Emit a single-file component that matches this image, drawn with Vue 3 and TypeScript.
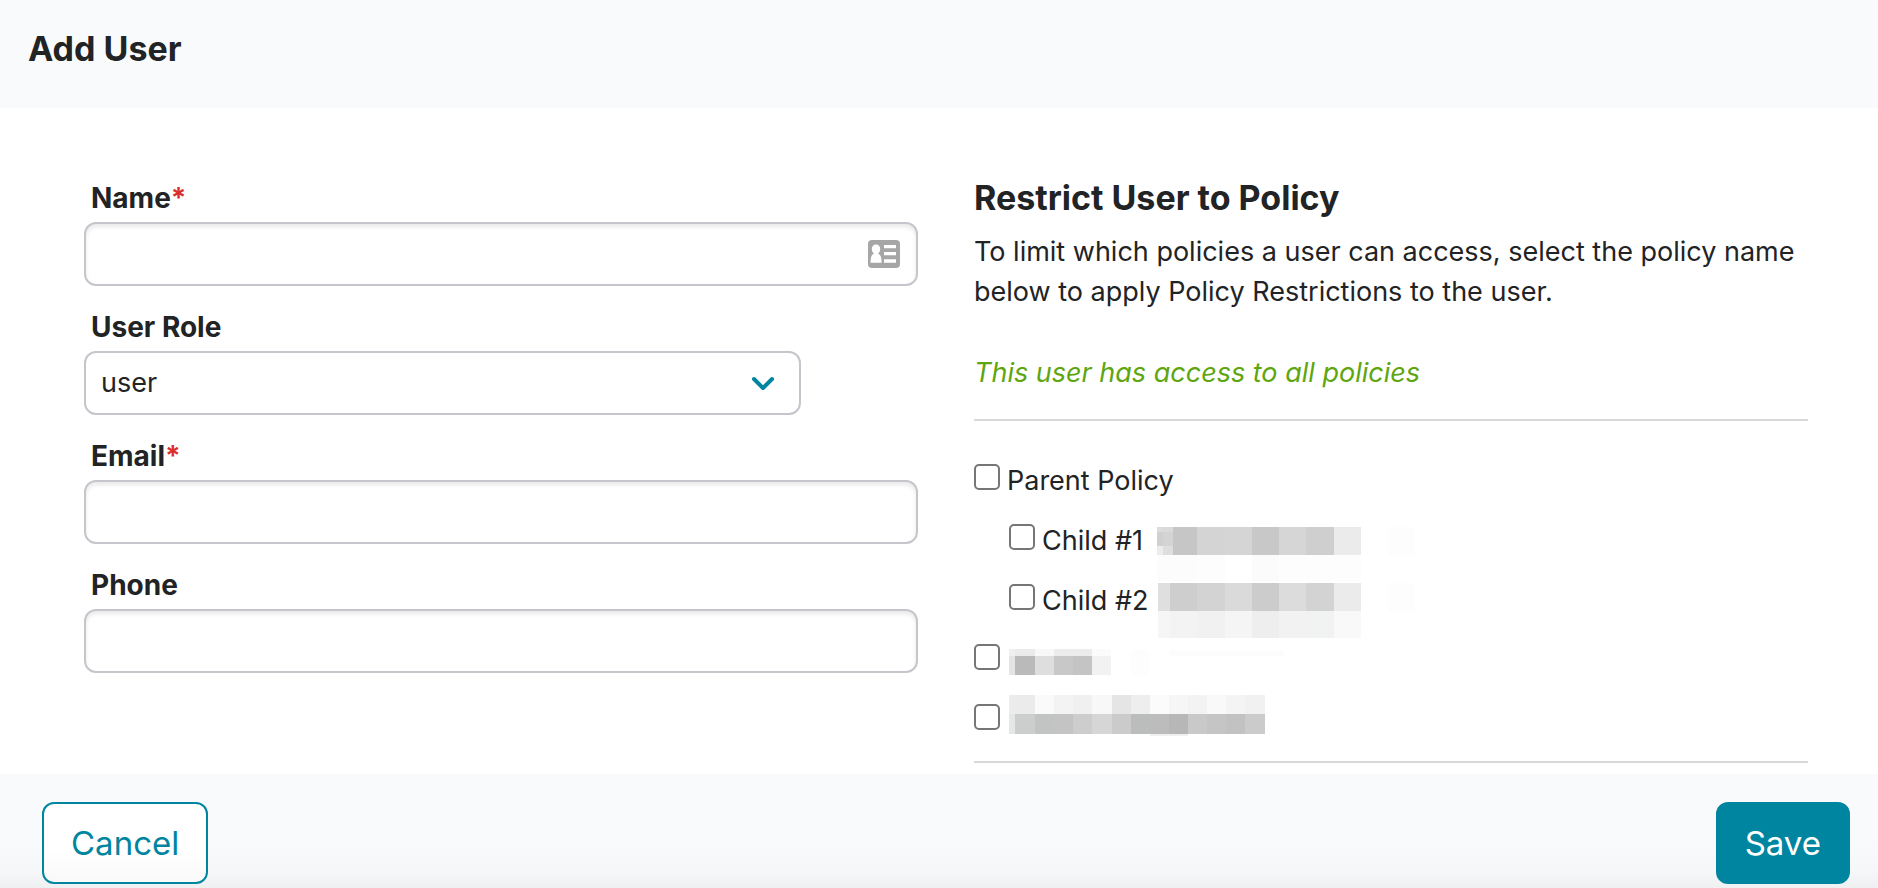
<script setup lang="ts">
import { reactive } from 'vue'

interface Block {
  x: number
  y: number
  w: number
  h: number
  fill: string
}

interface Policy {
  id: string
  label: string
  child: boolean
  blocks: Block[]
}

const form = reactive({ name: '', role: 'user', email: '', phone: '' })
const selected = reactive<Record<string, boolean>>({})

// Builds one strip of masked cells; `edges` holds one more entry than `fills`.
function strip(y: number, h: number, edges: number[], fills: string[]): Block[] {
  return fills.map((fill, i) => ({ x: edges[i], y, w: edges[i + 1] - edges[i], h, fill }))
}

const childEdges = [1, 13, 40, 68, 95, 122, 149, 177, 204]
const wideEdges = [2, 8, 28, 47, 66, 85, 105, 124, 143, 162, 181, 200, 219, 238, 258]

const policies: Policy[] = [
  { id: 'parent', label: 'Parent Policy', child: false, blocks: [] },
  {
    id: 'child-1',
    label: 'Child #1',
    child: true,
    blocks: [
      ...strip(17, 5, [0, 6, 16], ['#dcdcdc', '#dadada']),
      ...strip(22, 14, [0, 6, 16], ['#d0d0d0', '#d4d4d4']),
      ...strip(36, 9, [0, 6, 16], ['#ececec', '#dedede']),
      ...strip(17, 28, [16, 40, 68, 95, 122, 149, 177, 204], ['#c6c6c6', '#d4d4d4', '#d5d5d5', '#c8c8c8', '#d6d6d6', '#cfcfcf', '#ebebeb']),
      ...strip(45, 26, [1, 40, 68, 95, 122, 204], ['#fcfcfc', '#fdfdfd', '#ffffff', '#fbfbfb', '#fdfdfd']),
      { x: 231, y: 17, w: 27, h: 28, fill: '#fdfdfd' },
    ],
  },
  {
    id: 'child-2',
    label: 'Child #2',
    child: true,
    blocks: [
      ...strip(13, 28, childEdges, ['#dfdfdf', '#cecece', '#d3d3d3', '#dadada', '#cccccc', '#dcdcdc', '#d3d3d3', '#ebebeb']),
      ...strip(41, 27, childEdges, ['#f6f6f6', '#f3f3f3', '#f1f1f1', '#f5f5f5', '#eeeeee', '#f2f2f2', '#f1f3f3', '#f9f9f9']),
      { x: 231, y: 13, w: 27, h: 28, fill: '#fdfdfd' },
    ],
  },
  {
    id: 'policy-3',
    label: '',
    child: false,
    blocks: [
      ...strip(19, 7, [2, 8, 28, 47, 85, 104], ['#f0f0f0', '#ebebeb', '#f8f8f8', '#ececec', '#fbfbfb']),
      ...strip(26, 19, [2, 8, 28, 47, 66, 85, 104], ['#e4e4e4', '#bababa', '#dedede', '#c8c8c8', '#c4c4c4', '#f2f2f2']),
      { x: 162, y: 20, w: 115, h: 6, fill: '#fcfcfc' },
      { x: 124, y: 20, w: 18, h: 25, fill: '#fdfdfd' },
    ],
  },
  {
    id: 'policy-4',
    label: '',
    child: false,
    blocks: [
      ...strip(5, 19, wideEdges, ['#ececec', '#ebebeb', '#fafafa', '#f3f3f3', '#f0f0f0', '#f8f8f8', '#e5e5e5', '#eeeeee', '#fbfbfb', '#f6f6f6', '#f3f3f3', '#f9f9f9', '#f4f4f4', '#f1f1f1']),
      ...strip(24, 20, wideEdges, ['#e4e7e6', '#cbcecd', '#c1c4c3', '#c4c4c4', '#cdcdcd', '#d6d6d6', '#cbcbcb', '#babdbc', '#bcbcbc', '#b7b7b7', '#c9c9c9', '#c5c5c5', '#c2c2c2', '#cbcbcb']),
      { x: 143, y: 44, w: 38, h: 2, fill: '#f0f0f0' },
    ],
  },
]
</script>

<template>
  <form class="dialog" @submit.prevent>
    <header class="header">
      <h1 class="title">Add User</h1>
    </header>

    <main class="content">
      <section class="fields">
        <div class="field">
          <label class="label" for="name">Name<span class="required">*</span></label>
          <div class="control">
            <input id="name" v-model="form.name" class="input" type="text" required />
            <svg class="card-icon" viewBox="0 0 32 28" aria-hidden="true">
              <rect width="32" height="28" rx="4" fill="#a6a6a6" />
              <path
                fill="#fff"
                d="M8 4.5C10.6 4.5 12.2 6.4 12.2 9C12.2 11 11.3 12.7 10 13.5C12.6 14.6 13.6 17 13.6 22.7H2.6C2.6 17 3.5 14.6 6 13.5C4.7 12.7 3.8 11 3.8 9C3.8 6.4 5.4 4.5 8 4.5ZM16 5H28V8.3H16ZM16 12H28V15.3H16ZM16 19.3H28V22.7H16Z"
              />
            </svg>
          </div>
        </div>

        <div class="field">
          <label class="label" for="role">User Role</label>
          <div class="control control-select">
            <select id="role" v-model="form.role" class="input select">
              <option value="user">user</option>
            </select>
            <svg class="chevron" viewBox="0 0 24 16" aria-hidden="true">
              <path d="M3 3L12 12L21 3" fill="none" stroke="#0085a0" stroke-width="4" stroke-linecap="round" stroke-linejoin="round" />
            </svg>
          </div>
        </div>

        <div class="field">
          <label class="label" for="email">Email<span class="required">*</span></label>
          <input id="email" v-model="form.email" class="input" type="email" required />
        </div>

        <div class="field">
          <label class="label" for="phone">Phone</label>
          <input id="phone" v-model="form.phone" class="input" type="tel" />
        </div>
      </section>

      <section class="restrict">
        <h2 class="subtitle">Restrict User to Policy</h2>
        <p class="text">
          To limit which policies a user can access, select the policy name below to apply Policy Restrictions to the user.
        </p>
        <p class="text status">This user has access to all policies</p>
        <ul class="policies">
          <li v-for="policy in policies" :key="policy.id" class="policy" :class="{ child: policy.child }">
            <input :id="policy.id" v-model="selected[policy.id]" class="checkbox" type="checkbox" />
            <label class="policy-label" :for="policy.id">
              <span v-if="policy.label" class="policy-name">{{ policy.label }}</span>
              <svg v-if="policy.blocks.length" class="mask" viewBox="0 0 280 60" shape-rendering="crispEdges" aria-hidden="true">
                <rect v-for="(b, i) in policy.blocks" :key="i" :x="b.x" :y="b.y" :width="b.w" :height="b.h" :fill="b.fill" />
              </svg>
            </label>
          </li>
        </ul>
      </section>
    </main>

    <footer class="footer">
      <button class="button" type="button">Cancel</button>
      <button class="button primary" type="submit">Save</button>
    </footer>
  </form>
</template>

<style>
body {
  margin: 0;
  background: #fff;
}
</style>

<style scoped>
.dialog {
  display: flex;
  flex-direction: column;
  min-height: 100vh;
  color: #222325;
  font-family: Inter, "Liberation Sans", sans-serif;
  font-size: 27px;
  line-height: 40px;
}

.dialog * {
  box-sizing: border-box;
}

.header {
  padding: 27px 28px 37px;
  background: #f9fafc;
}

.title,
.subtitle {
  margin: 0;
  font-size: 34px;
  font-weight: 700;
  line-height: 44px;
}

.content {
  flex: 1;
  display: grid;
  grid-template-columns: 1fr 1fr;
  gap: 56px;
  padding: 68px 70px 11px 84px;
}

.fields {
  display: flex;
  flex-direction: column;
  gap: 25px;
  padding-top: 6px;
}

.field {
  display: flex;
  flex-direction: column;
}

.label {
  padding: 0 7px 8px;
  font-size: 28px;
  font-weight: 700;
  line-height: 32px;
}

.required {
  color: #d9302f;
}

.control {
  position: relative;
  display: flex;
}

.control-select {
  width: 86%;
}

.input {
  width: 100%;
  height: 64px;
  padding: 0 16px;
  border: 2px solid #c5c5cc;
  border-radius: 12px;
  background: #fff;
  box-shadow: inset 0 3px 4px rgba(0, 0, 0, 0.09);
  color: inherit;
  font: inherit;
}

.select {
  appearance: none;
  padding: 0 15px;
  box-shadow: none;
}

.card-icon {
  position: absolute;
  top: 18px;
  right: 18px;
  width: 32px;
  height: 28px;
}

.chevron {
  position: absolute;
  top: 25px;
  right: 26px;
  width: 24px;
  height: 16px;
  pointer-events: none;
}

.subtitle {
  padding-bottom: 12px;
}

.text {
  margin: 0;
}

.status {
  padding: 41px 0 26px;
  color: #5ea60f;
  font-style: italic;
}

.policies {
  margin: 0;
  padding: 29px 0 11px;
  border: solid #d9d9db;
  border-width: 2px 0;
  list-style: none;
}

.policy {
  display: flex;
  align-items: center;
  gap: 7px;
  height: 60px;
}

.child {
  padding-left: 35px;
}

.checkbox {
  flex: none;
  appearance: none;
  width: 26px;
  height: 26px;
  margin: 0 0 6px;
  border: 2px solid #767676;
  border-radius: 5px;
  background: #fff;
}

.checkbox:checked {
  border-color: #0085a0;
  background: #0085a0;
}

.policy-label {
  display: flex;
  align-items: center;
}

.policy-name {
  padding-top: 2px;
}

.child .policy-name {
  min-width: 115px;
}

.mask {
  display: block;
  width: 280px;
  height: 60px;
  overflow: visible;
}

.footer {
  display: flex;
  justify-content: space-between;
  padding: 28px 28px 4px 42px;
  background: linear-gradient(#f9fafc 60%, #f6f7f9 85%, #eff0f2);
}

.button {
  height: 82px;
  padding: 0 27px;
  border: 2px solid #0085a0;
  border-radius: 12px;
  background: linear-gradient(#fff 60%, #f9f9f9);
  color: #0085a0;
  font: inherit;
  font-size: 33px;
}

.primary {
  background: #0085a0;
  color: #fff;
}
</style>
